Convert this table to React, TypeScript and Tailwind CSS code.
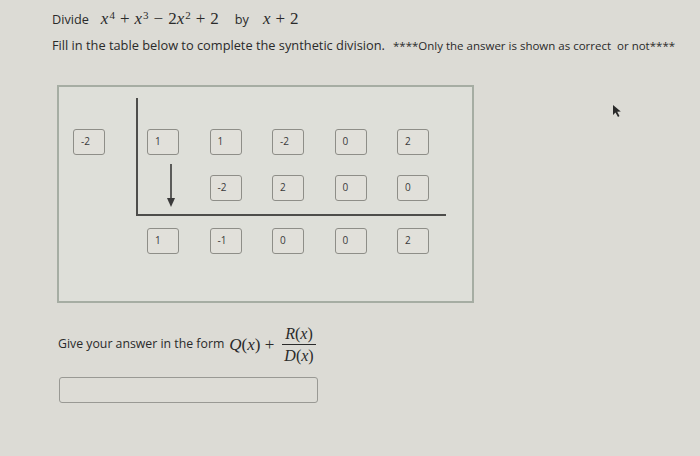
import React from "react";

const Cell = ({ v }: { v: string }) => (
  <div className="w-[32px] h-[26px] border border-[#8e8e88] rounded-[3px] bg-[#e1e0da] pl-[7px] pt-[5px] text-[10px] leading-[12px] text-[#3a3a3a]">
    {v}
  </div>
);

const Var = ({ c }: { c: string }) => <i className="font-['Liberation_Serif',serif]">{c}</i>;
const Op = ({ c }: { c: string }) => <span className="mx-[5px]">{c}</span>;

export default function App() {
  const row1 = ["1", "1", "-2", "0", "2"];
  const row2 = ["-2", "2", "0", "0"];
  const row3 = ["1", "-1", "0", "0", "2"];

  return (
    <div className="w-[700px] h-[456px] bg-[#dcdbd5] text-[#2a2a2a] font-['Open_Sans',sans-serif] overflow-hidden relative">
      {/* question */}
      <div className="pl-[52px] pt-[6px] flex items-baseline text-[12.7px] h-[22px]">
        <span>Divide</span>
        <span className="ml-[12px] font-['Liberation_Serif',serif] text-[17px] whitespace-pre">
          <Var c="x" />
          <sup className="text-[11px] ml-[1px]">4</sup>
          <Op c="+" />
          <Var c="x" />
          <sup className="text-[11px] ml-[1px]">3</sup>
          <Op c="−" />2<Var c="x" />
          <sup className="text-[11px] ml-[1px]">2</sup>
          <Op c="+" />2
        </span>
        <span className="ml-[16px]">by</span>
        <span className="ml-[14px] font-['Liberation_Serif',serif] text-[17px] whitespace-pre">
          <Var c="x" />
          <Op c="+" />2
        </span>
      </div>
      <div className="pl-[52px] pt-[14px] text-[12.8px] whitespace-nowrap">
        Fill in the table below to complete the synthetic division.
        <span className="ml-[8px] text-[11.5px]">****Only the answer is shown as correct&nbsp; or not****</span>
      </div>

      {/* synthetic division table */}
      <div className="ml-[57px] mt-[30px] w-[417px] h-[218px] border-2 border-[#a6ada3] bg-[#dedfd9] flex pl-[14px]">
        <div className="mt-[42px]">
          <Cell v="-2" />
        </div>
        <div className="ml-[31px] mt-[11px] flex flex-col">
          <div className="relative w-[310px] h-[118px] border-l-2 border-b-2 border-[#4d4d4b] pt-[31px] pl-[9px]">
            <div className="flex gap-x-[30.5px]">
              {row1.map((v, i) => (
                <Cell key={i} v={v} />
              ))}
            </div>
            <div className="flex gap-x-[30.5px] mt-[20px] pl-[62.5px]">
              {row2.map((v, i) => (
                <Cell key={i} v={v} />
              ))}
            </div>
            <svg className="absolute left-[28px] top-[66px]" width="10" height="44" viewBox="0 0 10 44">
              <line x1="5" y1="0" x2="5" y2="36" stroke="#3a3a3a" strokeWidth="1.6" />
              <path d="M1 34 L9 34 L5 43 Z" fill="#3a3a3a" />
            </svg>
          </div>
          <div className="flex gap-x-[30.5px] mt-[12px] pl-[11px]">
            {row3.map((v, i) => (
              <Cell key={i} v={v} />
            ))}
          </div>
        </div>
      </div>

      {/* answer form */}
      <div className="pl-[58px] mt-[20px] flex items-center">
        <span className="text-[12.3px]">Give your answer in the form</span>
        <span className="ml-[5px] font-['Liberation_Serif',serif] text-[17px] whitespace-pre">
          <i>Q</i>(<Var c="x" />){" +"}
        </span>
        <span className="ml-[8px] flex flex-col items-center font-['Liberation_Serif',serif] text-[16px] leading-[21px]">
          <span className="px-[2px]">
            <i>R</i>(<Var c="x" />)
          </span>
          <span className="w-full h-px bg-[#2a2a2a]" />
          <span className="px-[2px]">
            <i>D</i>(<Var c="x" />)
          </span>
        </span>
      </div>
      <div className="ml-[59px] mt-[11px] w-[259px] h-[26px] border border-[#999994] rounded-[3px] bg-[#dddcd6]" />

      {/* mouse pointer */}
      <svg className="absolute left-[612px] top-[104px]" width="10" height="14" viewBox="0 0 10 14">
        <path d="M1 1 L1 11 L3.5 8.5 L6 13 L7.5 12 L5.2 7.8 L8.8 7.5 Z" fill="#2a2a2a" />
      </svg>
    </div>
  );
}
